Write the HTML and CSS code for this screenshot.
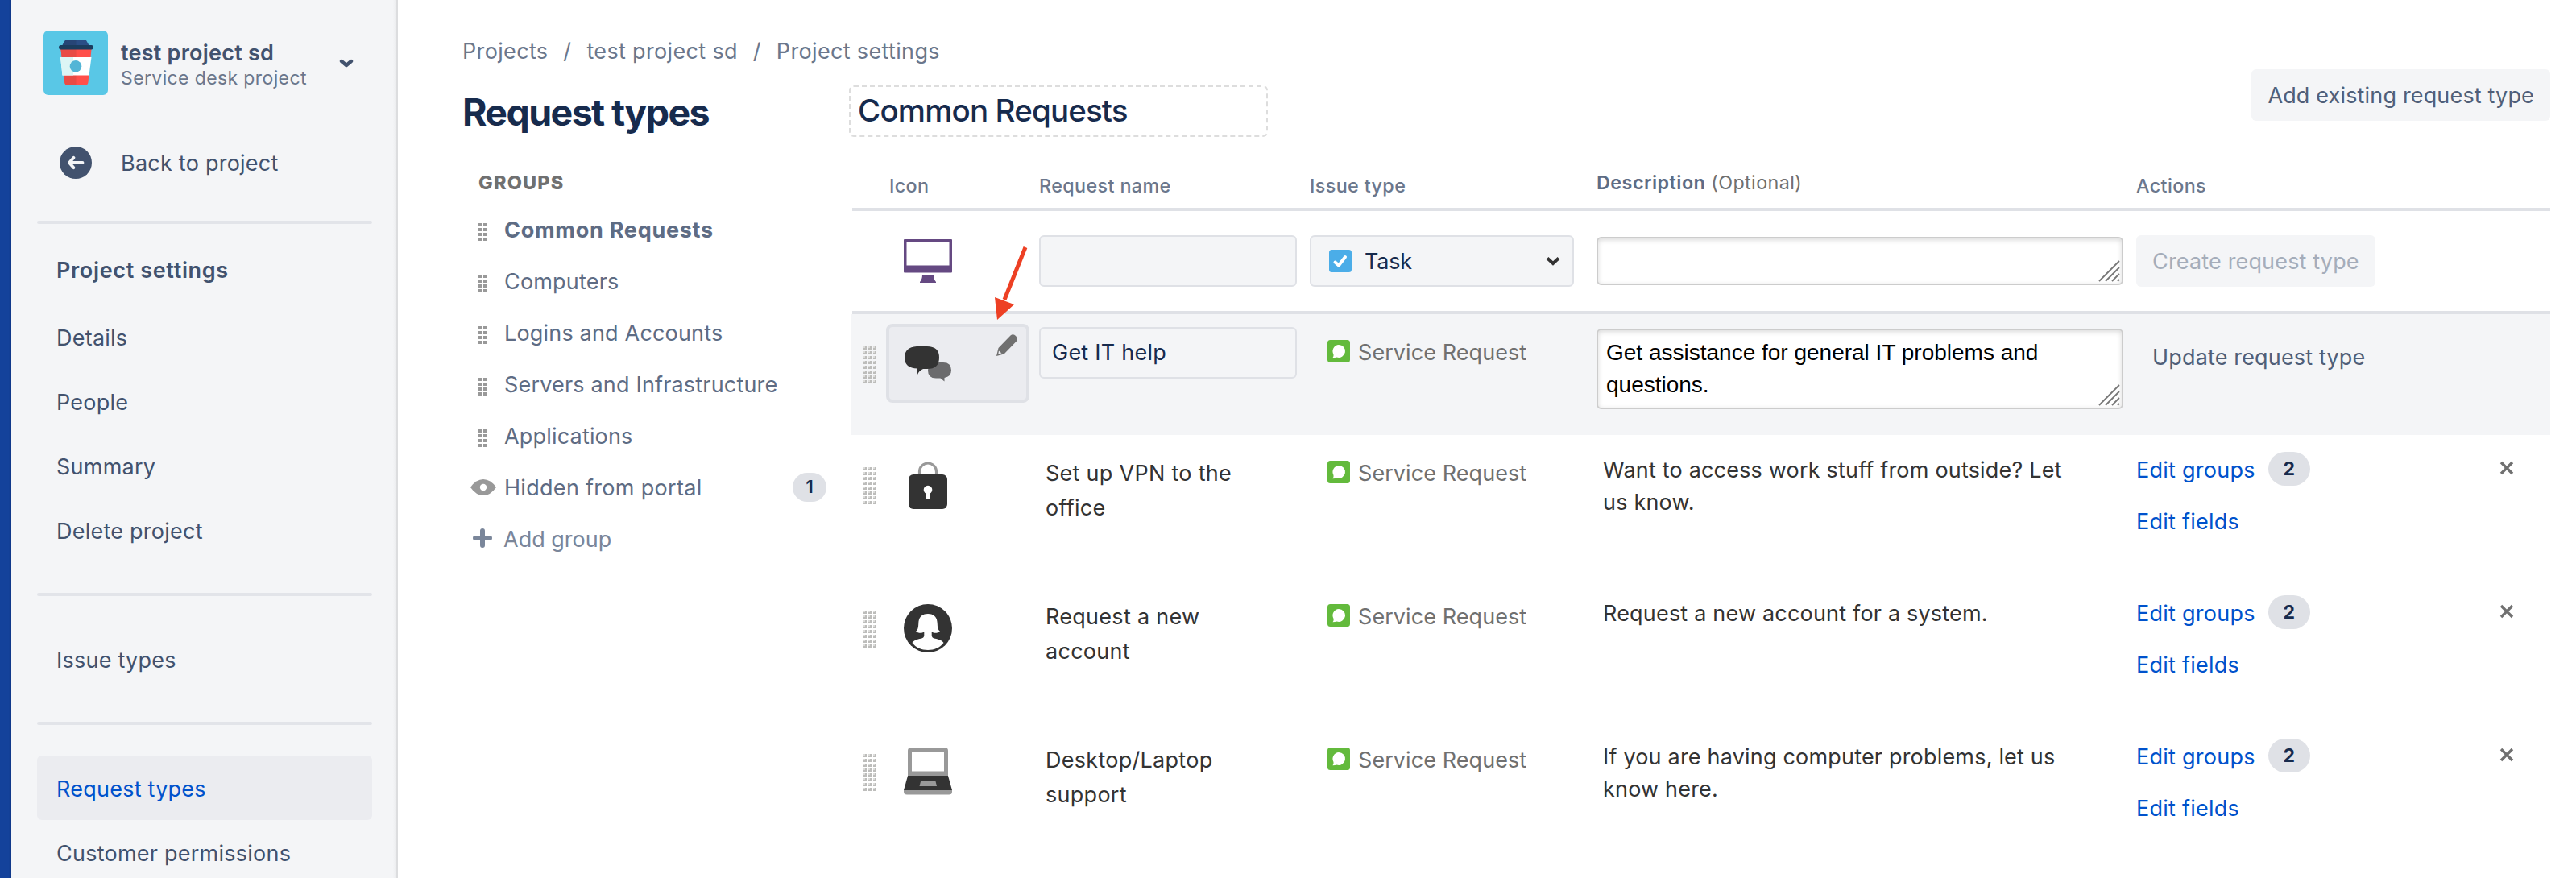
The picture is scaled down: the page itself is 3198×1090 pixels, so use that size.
FILE: index.html
```
<!DOCTYPE html>
<html lang="en">
<head>
    <meta charset="UTF-8">
    <meta name="viewport" content="width=device-width, initial-scale=1.0">
    <title>Request types - test project sd</title>
    <link rel="stylesheet" href="styles.css">
</head>
<body>
    <!-- shared icons -->
    <svg class="icon-defs" width="0" height="0">
        <defs>
            <pattern id="dots" width="6" height="6" patternUnits="userSpaceOnUse">
                <rect width="4" height="4" fill="#dcdcda"/>
                <path d="M4 0v4H0V2h2V0z" fill="#bdbdbb"/>
            </pattern>
            <symbol id="drag" viewBox="0 0 16 47">
                <rect width="16" height="47" fill="url(#dots)"/>
            </symbol>
            <symbol id="drag-small" viewBox="0 0 10 22">
                <path d="M0 0h4v4H0zM6 0h4v4H6zM0 6h4v4H0zM6 6h4v4H6zM0 12h4v4H0zM6 12h4v4H6zM0 18h4v4H0zM6 18h4v4H6z" fill="#999"/>
            </symbol>
            <symbol id="service-request" viewBox="0 0 28 28">
                <rect width="28" height="28" rx="3.5" fill="#63ba3c"/>
                <path d="M14 6a8 8 0 1 1-2.500 15.600Q9.500 22.300 6.500 22.300 8 20.500 7.500 18A8 8 0 0 1 14 6z" fill="#fff"/>
            </symbol>
            <symbol id="cross" viewBox="0 0 18 18">
                <path d="M2 2l14 14M16 2L2 16" stroke="#707070" stroke-width="3.400" fill="none"/>
            </symbol>
            <symbol id="resize" viewBox="0 0 28 28">
                <path d="M1 26L26 1M9 26L26 9M17 26l9-9M24 26l2-2" stroke="#777" stroke-width="1.800" fill="none"/>
            </symbol>
        </defs>
    </svg>

    <div class="page">
        <div class="global-nav"></div>

        <nav class="sidebar">
            <div class="project">
                <svg class="project-logo" viewBox="0 0 80 80">
                    <rect width="80" height="80" rx="6" fill="#59c7e6"/>
                    <path d="M27 12h26l4 7H23z" fill="#2b4e86"/>
                    <path d="M27 12h13.500v7H23z" fill="#274576"/>
                    <path d="M21.500 23h38l-4 41q-.3 3.500-3.500 3.500H29.500q-3 0-3.300-3.500z" fill="#ff4f4a"/>
                    <path d="M21.500 23h19v44.500h-11q-3 0-3.300-3.500z" fill="#e84b45"/>
                    <path d="M21 33h38.500l-3 22.500H23.500z" fill="#fff"/>
                    <path d="M21 33h16v22.500H23.500z" fill="#dcf5f5"/>
                    <rect x="19" y="18" width="43" height="5.500" rx="2.700" fill="#1b3c5e"/>
                    <circle cx="40" cy="44.300" r="7.300" fill="#52b5d6"/>
                </svg>
                <div class="project-text">
                    <span class="project-name">test project sd</span>
                    <span class="project-type">Service desk project</span>
                </div>
                <svg class="project-chevron" viewBox="0 0 18 12"><path d="M3 3l6 5 6-5" fill="none" stroke="#42526e" stroke-width="4.400" stroke-linecap="round" stroke-linejoin="round"/></svg>
            </div>
            <a class="back">
                <svg class="back-icon" viewBox="0 0 40 40">
                    <circle cx="20" cy="20" r="20" fill="#42526e"/>
                    <path d="M28.500 20H12.500M17.500 13.800L12 20l5.500 6.200" fill="none" stroke="#f4f5f7" stroke-width="3.800" stroke-linecap="round" stroke-linejoin="round"/>
                </svg>
                Back to project
            </a>
            <hr>
            <h3>Project settings</h3>
            <a class="nav-item">Details</a>
            <a class="nav-item">People</a>
            <a class="nav-item">Summary</a>
            <a class="nav-item">Delete project</a>
            <hr>
            <a class="nav-item">Issue types</a>
            <hr>
            <a class="nav-item selected">Request types</a>
            <a class="nav-item">Customer permissions</a>
        </nav>

        <main>
            <div class="breadcrumbs">
                <a>Projects</a><span>/</span><a>test project sd</a><span>/</span><a>Project settings</a>
            </div>

            <div class="content">
                <aside>
                    <h1>Request types</h1>
                    <h4>GROUPS</h4>
                    <div class="group current"><svg class="group-drag"><use href="#drag-small"/></svg>Common Requests</div>
                    <div class="group"><svg class="group-drag"><use href="#drag-small"/></svg>Computers</div>
                    <div class="group"><svg class="group-drag"><use href="#drag-small"/></svg>Logins and Accounts</div>
                    <div class="group"><svg class="group-drag"><use href="#drag-small"/></svg>Servers and Infrastructure</div>
                    <div class="group"><svg class="group-drag"><use href="#drag-small"/></svg>Applications</div>
                    <div class="group hidden-group">
                        <svg class="eye" viewBox="0 0 32 20">
                            <path d="M0 10Q7 0 16 0t16 10q-7 10-16 10T0 10z" fill="#999"/>
                            <circle cx="16" cy="10" r="4.200" fill="#fff"/>
                        </svg>
                        Hidden from portal
                        <span class="badge small">1</span>
                    </div>
                    <div class="group add-group">
                        <svg class="plus" viewBox="0 0 24 24"><path d="M12 3v18M3 12h18" stroke="#7a869a" stroke-width="6" stroke-linecap="round"/></svg>
                        Add group
                    </div>
                </aside>

                <section>
                    <div class="section-head">
                        <h2>Common Requests</h2>
                        <button class="btn">Add existing request type</button>
                    </div>

                    <div class="row head">
                        <div></div>
                        <div class="th icon-th">Icon</div>
                        <div class="th">Request name</div>
                        <div class="th">Issue type</div>
                        <div class="th desc-th"><b>Description</b> (Optional)</div>
                        <div class="th">Actions</div>
                    </div>

                    <div class="row create">
                        <div></div>
                        <div class="icon-cell">
                            <svg class="icon" viewBox="0 0 60 60" fill="#654982">
                                <path d="M1 5h58q1 0 1 1v39.500q0 1-1 1H1q-1 0-1-1V6q0-1 1-1zm2.500 3.500v29h53v-29z" fill-rule="evenodd"/>
                                <path d="M23 49h14q0 6 3 9v1H20v-1q3-3 3-9z"/>
                            </svg>
                        </div>
                        <div><div class="input"></div></div>
                        <div>
                            <div class="input select">
                                <svg class="type-icon" viewBox="0 0 28 28"><rect width="28" height="28" rx="3.500" fill="#4bade8"/><path d="M7.500 15.500l4.500 4L20 9" fill="none" stroke="#fff" stroke-width="4" stroke-linecap="round" stroke-linejoin="round"/></svg>
                                Task
                                <svg class="select-chevron" viewBox="0 0 18 12"><path d="M2 2.500l7 6.500 7-6.500" fill="none" stroke="#333" stroke-width="4"/></svg>
                            </div>
                        </div>
                        <div><div class="textarea one-line"><svg class="resize"><use href="#resize"/></svg></div></div>
                        <div><button class="btn disabled">Create request type</button></div>
                    </div>

                    <div class="row editing">
                        <svg class="row-drag"><use href="#drag"/></svg>
                        <div class="icon-button">
                            <svg class="icon" viewBox="0 0 60 60">
                                <path d="M40 28h9q10 0 10 9.500 0 8-8.500 9.500v4.500l-5-4H40q-10 0-10-9.500T40 28z" fill="#6b6b6d"/>
                                <path d="M16 8h13q15 0 15 14t-15 14h-5q-5 2-7 7v-7.500Q1 35 1 22T16 8z" fill="#333"/>
                            </svg>
                            <svg class="pencil" viewBox="0 0 27 27">
                                <path d="M17.500 1.500q3.500-2.500 6.500.5t1.500 6L9.500 24.500 0 27l2.500-10zM3 20.500L2.300 24.600l4.200-1z" fill="#707070" fill-rule="evenodd"/>
                            </svg>
                        </div>
                        <div><div class="input">Get IT help</div></div>
                        <div class="type"><svg class="type-icon"><use href="#service-request"/></svg>Service Request</div>
                        <div><div class="textarea">Get assistance for general IT problems and questions.<svg class="resize"><use href="#resize"/></svg></div></div>
                        <div><button class="btn subtle">Update request type</button></div>
                        <!-- arrow pointing at the pencil -->
                        <svg class="arrow" viewBox="0 0 44 96">
                            <path d="M40 5L14 70" stroke="#ed4024" stroke-width="5"/>
                            <path d="M2 67l24 9L5 95z" fill="#ed4024"/>
                        </svg>
                    </div>

                    <div class="row">
                        <svg class="row-drag"><use href="#drag"/></svg>
                        <div class="icon-cell">
                            <svg class="icon" viewBox="0 0 60 60">
                                <path d="M19.500 20v-6.500a10.500 10.500 0 0 1 21 0V20" fill="none" stroke="#999" stroke-width="3.200"/>
                                <rect x="6" y="17" width="48" height="43" rx="6" fill="#333"/>
                                <circle cx="30" cy="36" r="5.300" fill="#fff"/>
                                <path d="M28 39h4v8h-4z" fill="#fff"/>
                            </svg>
                        </div>
                        <div class="name">Set up VPN to the office</div>
                        <div class="type"><svg class="type-icon"><use href="#service-request"/></svg>Service Request</div>
                        <div class="desc">Want to access work stuff from outside? Let us know.</div>
                        <div class="actions">
                            <div class="links">
                                <div><a>Edit groups</a><span class="badge">2</span></div>
                                <a>Edit fields</a>
                            </div>
                            <svg class="cross"><use href="#cross"/></svg>
                        </div>
                    </div>

                    <div class="row">
                        <svg class="row-drag"><use href="#drag"/></svg>
                        <div class="icon-cell">
                            <svg class="icon" viewBox="0 0 60 60">
                                <circle cx="30" cy="30" r="30" fill="#333"/>
                                <path d="M30 12c-9 0-11.500 6-11.700 12-.2 5-.8 8-3.300 10 3 2 7 2.500 10.300.4V39c0 2-1.500 3.200-4 3.700-4.500.8-9 2-10.800 5.300C15 54 22 57 30 57s15-3 19.500-9c-1.800-3.300-6.300-4.500-10.800-5.300-2.500-.5-4-1.700-4-3.700v-4.600c3.300 2.100 7.300 1.600 10.300-.4-2.500-2-3.100-5-3.300-10C41.500 18 39 12 30 12z" fill="#fff"/>
                            </svg>
                        </div>
                        <div class="name">Request a new account</div>
                        <div class="type"><svg class="type-icon"><use href="#service-request"/></svg>Service Request</div>
                        <div class="desc">Request a new account for a system.</div>
                        <div class="actions">
                            <div class="links">
                                <div><a>Edit groups</a><span class="badge">2</span></div>
                                <a>Edit fields</a>
                            </div>
                            <svg class="cross"><use href="#cross"/></svg>
                        </div>
                    </div>

                    <div class="row">
                        <svg class="row-drag"><use href="#drag"/></svg>
                        <div class="icon-cell">
                            <svg class="icon" viewBox="0 0 60 60">
                                <path d="M9 0h42q4 0 4 4v32H5V4q0-4 4-4zm1 5v24.500h40V5z" fill="#999" fill-rule="evenodd"/>
                                <path d="M5 35h50l5 18H0z" fill="#333"/>
                                <path d="M0 53h60v2q0 3.500-4 3.500H4Q0 58.500 0 55z" fill="#999"/>
                                <path d="M21 42h18.500l1.500 6H19.500z" fill="#999"/>
                            </svg>
                        </div>
                        <div class="name">Desktop/Laptop support</div>
                        <div class="type"><svg class="type-icon"><use href="#service-request"/></svg>Service Request</div>
                        <div class="desc">If you are having computer problems, let us know here.</div>
                        <div class="actions">
                            <div class="links">
                                <div><a>Edit groups</a><span class="badge">2</span></div>
                                <a>Edit fields</a>
                            </div>
                            <svg class="cross"><use href="#cross"/></svg>
                        </div>
                    </div>
                </section>
            </div>
        </main>
    </div>
</body>
</html>
```
FILE: styles.css
```
* {
    box-sizing: border-box;
}

body {
    margin: 0;
    font-family: Inter, "Liberation Sans", sans-serif;
    font-size: 27px;
    font-weight: 430;
    letter-spacing: 0.24px;
    color: #333;
    background-color: #fff;
}

h1, h2, h3, h4 {
    margin: 0;
}

svg {
    display: block;
    flex-shrink: 0;
}

.icon-defs {
    position: absolute;
}

.page {
    display: flex;
    height: 1090px;
    overflow: hidden;
}

.global-nav {
    width: 14px;
    flex-shrink: 0;
    background: linear-gradient(to right, #14429b 0, #14429b 11px, #10398a 13px);
}

/* sidebar */

.sidebar {
    width: 480px;
    flex-shrink: 0;
    padding: 38px 32px 0 32px;
    background: linear-gradient(to right, #f4f5f7 474px, #eaebed 478px, #dcdddf 478px);
    color: #42526e;
}

.project {
    display: flex;
    align-items: center;
    height: 80px;
    padding: 0 23px 0 8px;
}

.project-logo {
    width: 80px;
    height: 80px;
    margin-right: 16px;
}

.project-text {
    flex: 1;
    display: flex;
    flex-direction: column;
    padding-top: 3px;
}

.project-name {
    font-weight: 600;
    line-height: 34px;
}

.project-type {
    font-size: 23px;
    line-height: 28px;
    letter-spacing: 0.38px;
    color: #6b778c;
}

.project-chevron {
    width: 18px;
    height: 12px;
    margin-top: 2px;
}

.back {
    display: flex;
    align-items: center;
    height: 80px;
    margin-top: 44px;
    padding-left: 28px;
}

.back-icon {
    width: 40px;
    height: 40px;
    margin-right: 36px;
}

.sidebar hr {
    height: 4px;
    margin: 38px 0;
    border: none;
    border-radius: 2px;
    background-color: #e2e4e9;
}

.back + hr {
    margin-top: 32px;
}

.sidebar h3 {
    height: 62px;
    padding-left: 24px;
    font-size: 27px;
    font-weight: 600;
    line-height: 40px;
    letter-spacing: 0.65px;
}

.nav-item {
    display: block;
    height: 80px;
    padding: 2px 0 0 24px;
    line-height: 80px;
    border-radius: 6px;
}

.nav-item.selected {
    background-color: #ebecf0;
    color: #0052cc;
}

/* main */

main {
    flex: 1;
    padding: 43px 32px 0 79px;
}

.breadcrumbs {
    display: flex;
    height: 43px;
    padding-left: 1px;
    line-height: 41px;
    letter-spacing: 0.34px;
    color: #6b778c;
}

.breadcrumbs span {
    width: 48px;
    text-align: center;
}

.content {
    display: flex;
}

aside {
    width: 483px;
    flex-shrink: 0;
}

h1 {
    margin-top: 25px;
    padding-left: 1px;
    font-size: 46.5px;
    font-weight: 650;
    line-height: 56px;
    letter-spacing: -1.6px;
    color: #172b4d;
}

h4 {
    margin-top: 39px;
    padding-left: 21px;
    font-size: 23.5px;
    font-weight: 800;
    line-height: 41px;
    letter-spacing: 1.2px;
    color: #707070;
}

h4 + .group {
    margin-top: 6px;
}

.group {
    display: flex;
    align-items: center;
    height: 64px;
    padding-left: 21px;
    letter-spacing: 0.18px;
    color: #5e6c84;
}

.group.current {
    font-weight: 700;
    letter-spacing: 0.73px;
}

.group-drag {
    width: 10px;
    height: 22px;
    margin: 6px 22px 0 0;
}

.hidden-group {
    padding: 0 30px 0 11px;
    letter-spacing: 0.3px;
}

.eye {
    width: 32px;
    height: 20px;
    margin-right: 10px;
}

.add-group {
    padding-left: 14px;
    letter-spacing: 0;
    color: #7a869a;
}

.plus {
    width: 24px;
    height: 24px;
    margin: 0 14px 2px 0;
}

.badge {
    display: inline-block;
    width: 52px;
    margin-left: 16px;
    border-radius: 21px;
    background-color: #dfe1e6;
    color: #172b4d;
    font-size: 23px;
    font-weight: 700;
    line-height: 42px;
    letter-spacing: 0;
    text-align: center;
}

.badge.small {
    width: 42px;
    margin-left: auto;
    font-size: 21px;
    font-weight: 700;
    line-height: 36px;
}

section {
    flex: 1;
}

.section-head {
    display: flex;
    justify-content: space-between;
    align-items: flex-start;
    height: 84px;
}

h2 {
    width: 520px;
    height: 64px;
    margin: 20px 0 0 -2px;
    padding-left: 9px;
    border: 2px dashed #ddd;
    border-radius: 6px;
    font-size: 38.5px;
    font-weight: 550;
    line-height: 58px;
    letter-spacing: -0.85px;
    color: #172b4d;
}

.btn {
    height: 64px;
    padding: 1px 20px 0;
    border: none;
    border-radius: 6px;
    background-color: #f4f5f7;
    color: #505f79;
    font: inherit;
    letter-spacing: 0.16px;
    white-space: nowrap;
    line-height: 62px;
}

.btn.disabled {
    color: #a5adba;
}

.btn.subtle {
    background: none;
}

/* table */

.row {
    display: grid;
    grid-template-columns: 44px 190px 336px 356px 670px 1fr;
    align-items: start;
    height: 178px;
    position: relative;
}

.row.head {
    height: 92px;
    padding-top: 45px;
}

.row.head::after,
.row.create::after {
    content: "";
    position: absolute;
    left: 2px;
    right: 0;
    bottom: 0;
    height: 4px;
    background-color: #dfe1e6;
}

.th {
    font-size: 23.3px;
    font-weight: 550;
    line-height: 32px;
    letter-spacing: 0.4px;
    color: #6b778c;
}

.icon-th {
    padding-left: 4px;
}

.desc-th {
    margin-top: -4px;
    font-weight: 430;
    color: #707070;
}

.desc-th b {
    font-weight: 630;
    letter-spacing: 0.5px;
    color: #5e6c84;
}

.row.create {
    height: 128px;
    padding-top: 30px;
}

.row.create .icon-cell {
    padding-top: 0;
}

.row.editing {
    height: 150px;
    background-color: #f4f5f7;
}

.row.editing .input {
    margin-top: 16px;
}

.row.editing .btn {
    margin-top: 21px;
}

.icon-cell {
    padding: 32px 0 0 22px;
}

.icon {
    width: 60px;
    height: 60px;
}

.row-drag {
    width: 16px;
    height: 47px;
    margin: 40px 0 0 16px;
}

.icon-button {
    display: flex;
    justify-content: space-between;
    width: 178px;
    height: 98px;
    margin-top: 12px;
    padding: 16px 10px 0 18px;
    border: 4px solid #dfe1e6;
    border-radius: 8px;
    background-color: #ebecf0;
}

.pencil {
    width: 27px;
    height: 27px;
    margin-top: -7px;
}

.arrow {
    position: absolute;
    left: 177px;
    top: -88px;
    width: 44px;
    height: 96px;
}

.input {
    display: flex;
    align-items: center;
    width: 320px;
    height: 64px;
    padding: 0 14px 1px;
    border: 2px solid #dfe1e6;
    border-radius: 6px;
    background-color: #f4f5f7;
    color: #172b4d;
}

.select {
    width: 328px;
    padding: 0 15px 0 22px;
    letter-spacing: -0.2px;
}

.select .type-icon {
    margin-right: 16px;
}

.select-chevron {
    width: 18px;
    height: 12px;
    margin-left: auto;
}

.type-icon {
    width: 28px;
    height: 28px;
}

.textarea {
    position: relative;
    width: 654px;
    height: 100px;
    margin-top: 18px;
    padding: 8px 60px 0 10px;
    border: 2px solid #ccc;
    border-radius: 6px;
    background-color: #fff;
    box-shadow: inset 0 2px 6px rgba(0, 0, 0, 0.15);
    color: #000;
    font-family: "Liberation Sans", Arial, sans-serif;
    font-size: 28px;
    letter-spacing: 0;
    line-height: 40px;
}

.textarea.one-line {
    height: 60px;
    margin-top: 2px;
}

.resize {
    position: absolute;
    right: 1px;
    bottom: 1px;
    width: 28px;
    height: 28px;
}

.name {
    width: 286px;
    padding: 27px 0 0 8px;
    line-height: 42.500px;
    letter-spacing: 0.28px;
}

.type {
    display: flex;
    align-items: center;
    gap: 10px;
    height: 42px;
    margin-top: 26px;
    padding-left: 22px;
    letter-spacing: 0.07px;
    color: #707070;
}

.type .type-icon {
    margin-bottom: 2px;
}

.desc {
    width: 596px;
    padding: 24px 0 0 8px;
    line-height: 40px;
    letter-spacing: 0.19px;
}

.actions {
    display: flex;
    justify-content: space-between;
    padding: 12px 45px 0 0;
}

.links {
    line-height: 64px;
    letter-spacing: 0.25px;
}

.links > div {
    display: flex;
    align-items: center;
    height: 64px;
}

.links .badge {
    margin-top: -4px;
}

.links a {
    color: #0052cc;
}

.cross {
    width: 18px;
    height: 18px;
    margin-top: 20px;
}
```
